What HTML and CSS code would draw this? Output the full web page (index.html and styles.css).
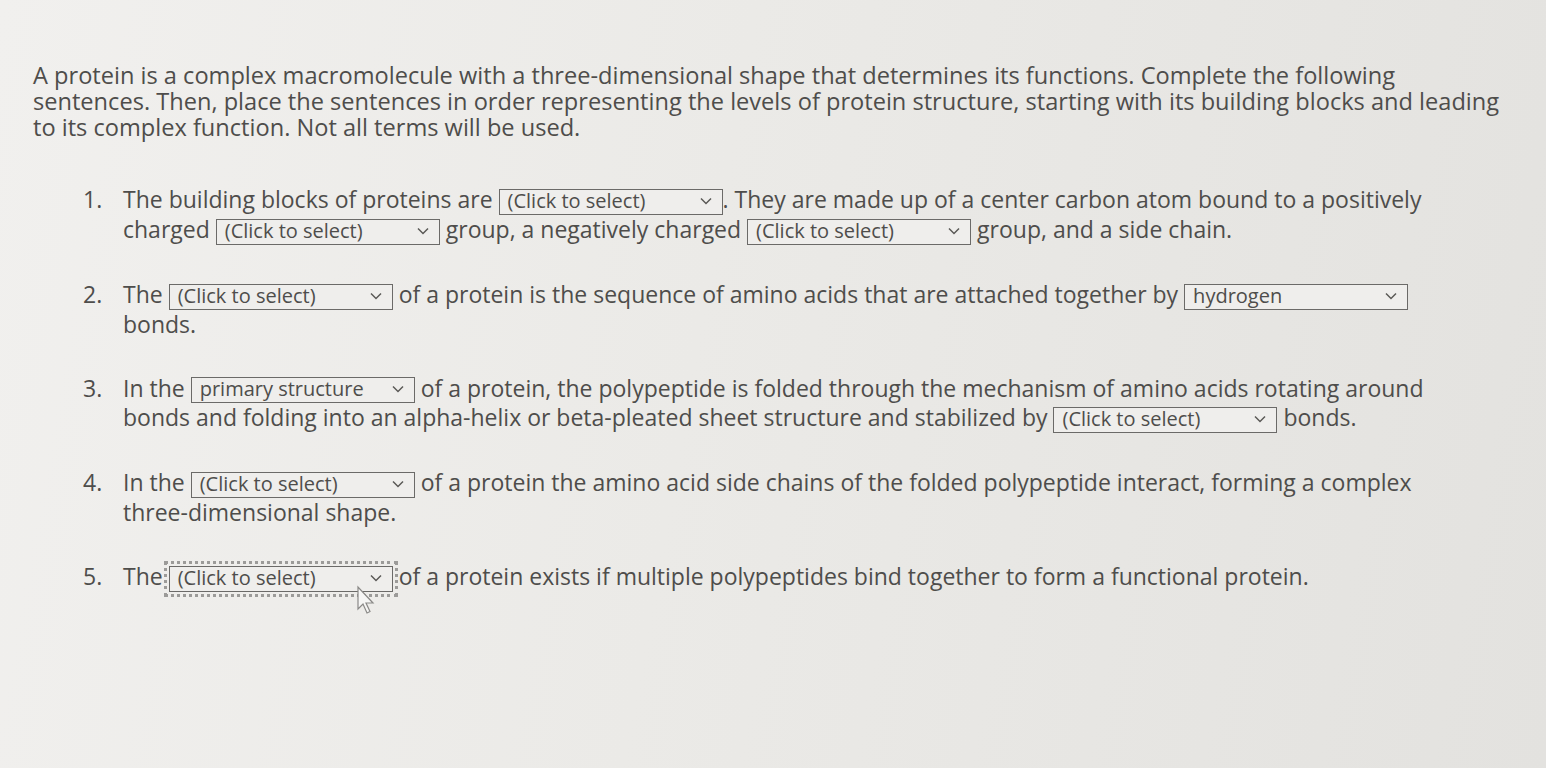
FILE: index.html
```html
<!DOCTYPE html>
<html lang="en">
<head>
    <meta charset="UTF-8">
    <title>Protein Structure</title>
    <link rel="stylesheet" href="styles.css">
</head>
<body>
    <div class="question">
        <p class="intro">A protein is a complex macromolecule with a three-dimensional shape that determines its functions. Complete the following<br>sentences. Then, place the sentences in order representing the levels of protein structure, starting with its building blocks and leading to its complex function. Not all terms will be used.</p>

        <ol class="items">
            <li>
                <span class="num">1.</span>
                <span class="text">The building blocks of proteins are <span class="pick"><span class="val">(Click to select)</span><svg viewBox="0 0 12 8"><path d="M1 1.5l5 5 5-5"/></svg></span>. They are made up of a center carbon atom bound to a positively charged <span class="pick"><span class="val">(Click to select)</span><svg viewBox="0 0 12 8"><path d="M1 1.5l5 5 5-5"/></svg></span> group, a negatively charged <span class="pick"><span class="val">(Click to select)</span><svg viewBox="0 0 12 8"><path d="M1 1.5l5 5 5-5"/></svg></span> group, and a side chain.</span>
            </li>
            <li>
                <span class="num">2.</span>
                <span class="text">The <span class="pick"><span class="val">(Click to select)</span><svg viewBox="0 0 12 8"><path d="M1 1.5l5 5 5-5"/></svg></span> of a protein is the sequence of amino acids that are attached together by <span class="pick"><span class="val">hydrogen</span><svg viewBox="0 0 12 8"><path d="M1 1.5l5 5 5-5"/></svg></span> bonds.</span>
            </li>
            <li>
                <span class="num">3.</span>
                <span class="text">In the <span class="pick"><span class="val">primary structure</span><svg viewBox="0 0 12 8"><path d="M1 1.5l5 5 5-5"/></svg></span> of a protein, the polypeptide is folded through the mechanism of amino acids rotating around bonds and folding into an alpha-helix or beta-pleated sheet structure and stabilized by <span class="pick"><span class="val">(Click to select)</span><svg viewBox="0 0 12 8"><path d="M1 1.5l5 5 5-5"/></svg></span> bonds.</span>
            </li>
            <li>
                <span class="num">4.</span>
                <span class="text">In the <span class="pick"><span class="val">(Click to select)</span><svg viewBox="0 0 12 8"><path d="M1 1.5l5 5 5-5"/></svg></span> of a protein the amino acid side chains of the folded polypeptide interact, forming a complex <span class="nw">three-dimensional</span> shape.</span>
            </li>
            <li>
                <span class="num">5.</span>
                <span class="text">The <span class="pick focused"><span class="val">(Click to select)</span><svg viewBox="0 0 12 8"><path d="M1 1.5l5 5 5-5"/></svg><svg class="cursor" viewBox="0 0 20 30"><path d="M2 2v22l5-5 4 9 3-1.5-4-8.5h7z"/></svg></span> of a protein exists if multiple polypeptides bind together to form a functional protein.</span>
            </li>
        </ol>
    </div>
</body>
</html>
```

FILE: styles.css
```css
html, body {
    height: 100%;
}
body {
    margin: 0;
    font-family: "Open Sans", "Liberation Sans", sans-serif;
    color: #4e4d4b;
    background: linear-gradient(100deg, #f1f0ee 0%, #ebeae7 45%, #e3e2df 100%);
}
.question {
    padding: 62px 20px 0 33px;
}
.intro {
    margin: 0;
    font-size: 23.6px;
    line-height: 26px;
    max-width: 1480px;
}
.items {
    list-style: none;
    margin: 45px 0 0;
    padding: 0 0 0 50px;
    width: 1387px;
}
.items li {
    display: flex;
    font-size: 23px;
    line-height: 29px;
    margin-bottom: 35px;
}
.num {
    flex: none;
    width: 40px;
}
.text {
    flex: 1;
}
.nw {
    white-space: nowrap;
}
.pick {
    position: relative;
    display: inline-flex;
    align-items: center;
    justify-content: space-between;
    box-sizing: border-box;
    width: 224px;
    height: 26px;
    padding: 0 10px 2px 8px;
    border: 1px solid #6b6a68;
    background: #efeeec;
    font-size: 20px;
    line-height: 22px;
    vertical-align: middle;
}
.pick svg {
    width: 12px;
    height: 8px;
    fill: none;
    stroke: #5a5957;
    stroke-width: 1.5;
}
.pick.focused {
    outline: 3px dotted #9c9b99;
    outline-offset: 2px;
}
.pick .cursor {
    position: absolute;
    left: 186px;
    top: 18px;
    width: 20px;
    height: 30px;
    fill: #f6f6f5;
    stroke: #8a8987;
    stroke-width: 1.2;
}
```
